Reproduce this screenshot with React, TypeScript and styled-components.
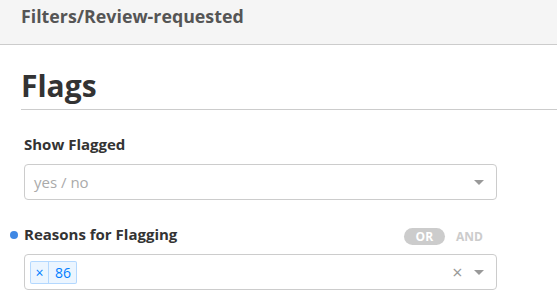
import React, {useState} from "react";
import styled, {createGlobalStyle} from "styled-components";

const GlobalStyle = createGlobalStyle`
  html, body {
    margin: 0;
    padding: 0;
    background: #fff;
    font-family: "Open Sans", "Liberation Sans", sans-serif;
    color: #333;
  }
`

const TopBar = styled.div`
  background: #f5f5f5;
  border-bottom: 1px solid #ccc;
  padding: 4px 21px 0;
  box-sizing: border-box;
  height: 45px;
  font-size: 17.8px;
  line-height: 24px;
  font-weight: 700;
  color: #555;
`

const Page = styled.div`
  padding-left: 21px;
`

const Title = styled.h1`
  margin: 23px 0 0;
  padding-bottom: 5px;
  font-size: 30px;
  line-height: 36px;
  font-weight: 700;
  color: #333;
  border-bottom: 1px solid #ccc;
`

const Field = styled.div`
  position: relative;
  margin: 24px 0 0 3px;
  width: 473px;
`

const LabelRow = styled.div`
  display: flex;
  align-items: center;
  justify-content: space-between;
  height: 20px;
  margin-bottom: 10px;
`

const Label = styled.label<{ $marked?: boolean }>`
  position: relative;
  font-size: 15px;
  line-height: 20px;
  font-weight: 700;
  color: #333;
  ${p => p.$marked && `
    &::before {
      content: "";
      position: absolute;
      left: -14px;
      top: 7px;
      width: 8px;
      height: 8px;
      border-radius: 50%;
      background: #3f88e4;
    }
  `}
`

const Toggle = styled.div`
  display: flex;
  align-items: center;
  gap: 11px;
  margin: 5px 14px 0 0;
`

const ToggleOption = styled.span<{ $active?: boolean }>`
  font-size: 12px;
  font-weight: 700;
  line-height: 17px;
  height: 17px;
  color: ${p => p.$active ? '#fff' : '#ccc'};
  background: ${p => p.$active ? '#ccc' : 'transparent'};
  border-radius: 9px;
  padding: ${p => p.$active ? '0 12px' : '0'};
  cursor: pointer;
`

const Control = styled.div`
  display: flex;
  align-items: center;
  height: 36px;
  box-sizing: border-box;
  border: 1px solid #ccc;
  border-radius: 4px;
  background: #fff;
  padding-left: 5px;
`

const ValueArea = styled.div`
  flex: 1;
  display: flex;
  align-items: center;
`

const Placeholder = styled.span`
  padding-left: 4px;
  font-size: 15px;
  color: #aaa;
`

const Tag = styled.div`
  display: flex;
  height: 23px;
  box-sizing: border-box;
  border: 1px solid rgba(0, 126, 255, 0.24);
  border-radius: 2px;
  background: rgba(0, 126, 255, 0.08);
  color: #007eff;
  line-height: 21px;
`

const TagRemove = styled.span`
  width: 17px;
  text-align: center;
  border-right: 1px solid rgba(0, 126, 255, 0.24);
  font-size: 14px;
  cursor: pointer;
`

const TagLabel = styled.span`
  padding: 0 5px 0 6px;
  font-size: 14px;
`

const Clear = styled.span`
  width: 17px;
  text-align: center;
  font-size: 18px;
  line-height: 1;
  color: #999;
  cursor: pointer;
`

const ArrowZone = styled.span`
  width: 25px;
  padding-right: 5px;
  display: flex;
  justify-content: center;
`

const Arrow = styled.span`
  width: 0;
  height: 0;
  border-style: solid;
  border-width: 5px 5px 2.5px;
  border-color: #999 transparent transparent;
  margin-top: 3px;
`

const App = () => {
    const [mode, setMode] = useState<'OR' | 'AND'>('OR')
    const [reasons, setReasons] = useState<string[]>(['86'])

    return (
        <>
            <GlobalStyle/>
            <TopBar>Filters/Review-requested</TopBar>
            <Page>
                <Title>Flags</Title>
                <Field>
                    <LabelRow>
                        <Label>Show Flagged</Label>
                    </LabelRow>
                    <Control>
                        <ValueArea>
                            <Placeholder>yes / no</Placeholder>
                        </ValueArea>
                        <ArrowZone><Arrow/></ArrowZone>
                    </Control>
                </Field>
                <Field>
                    <LabelRow>
                        <Label $marked>Reasons for Flagging</Label>
                        <Toggle>
                            <ToggleOption $active={mode === 'OR'} onClick={() => setMode('OR')}>OR</ToggleOption>
                            <ToggleOption $active={mode === 'AND'} onClick={() => setMode('AND')}>AND</ToggleOption>
                        </Toggle>
                    </LabelRow>
                    <Control>
                        <ValueArea>
                            {reasons.map(r =>
                                <Tag key={r}>
                                    <TagRemove onClick={() => setReasons(reasons.filter(x => x !== r))}>×</TagRemove>
                                    <TagLabel>{r}</TagLabel>
                                </Tag>
                            )}
                        </ValueArea>
                        <Clear onClick={() => setReasons([])}>×</Clear>
                        <ArrowZone><Arrow/></ArrowZone>
                    </Control>
                </Field>
            </Page>
        </>
    );
}

export default App;
